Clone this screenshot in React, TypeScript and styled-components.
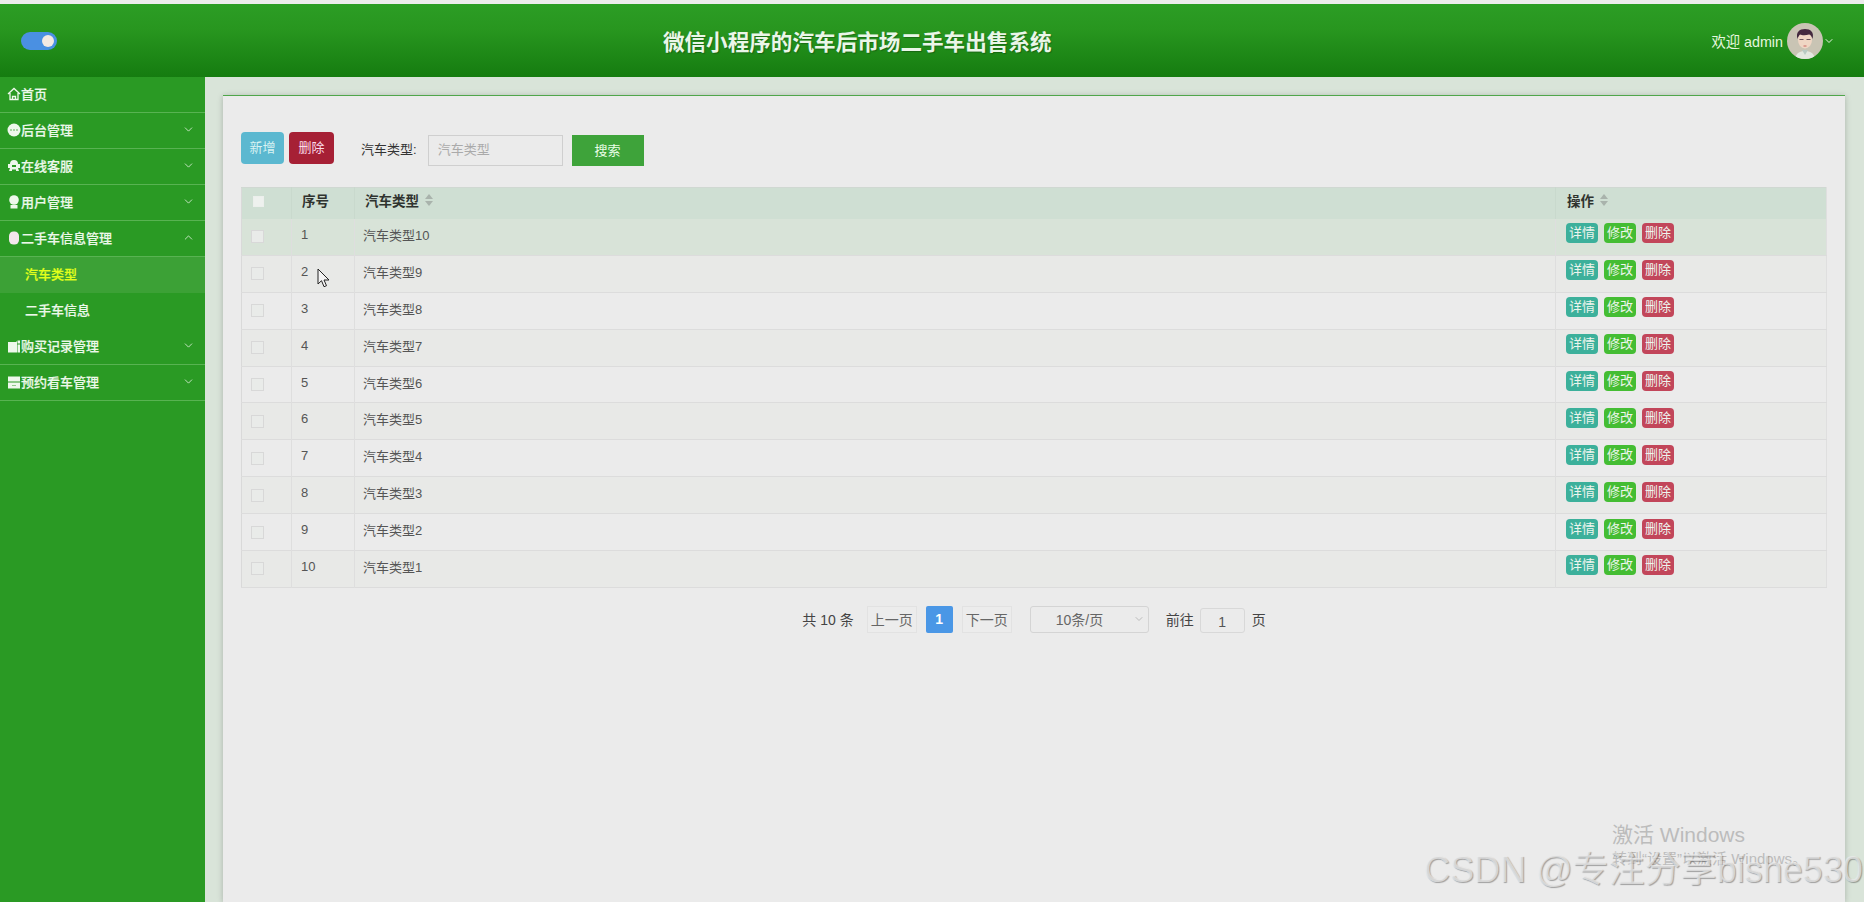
import React from 'react';
import styled, { createGlobalStyle } from 'styled-components';
import { ChevronDown, ChevronUp } from 'lucide-react';

const FONT = '"Liberation Sans", "Noto Sans CJK SC", sans-serif';

const GlobalStyle = createGlobalStyle`
  html, body {
    margin: 0;
    padding: 0;
    height: 100%;
    overflow: hidden;
    background: #ececec;
    font-family: ${FONT};
  }
  * { box-sizing: border-box; }
`;

const Page = styled.div`
  position: relative;
  display: flex;
  flex-direction: column;
  height: 100vh;
  padding-top: 4px;
  overflow: hidden;
`;

const TopBar = styled.header`
  display: flex;
  align-items: center;
  flex: 0 0 73px;
  padding: 0 29px 0 21px;
  background: linear-gradient(180deg, #2c9d25 0%, #28961f 35%, #157c10 100%);
`;

const Toggle = styled.div`
  display: flex;
  align-items: center;
  justify-content: flex-end;
  width: 36px;
  height: 18px;
  padding-right: 3px;
  border-radius: 9px;
  background: #4a90e2;
`;

const Knob = styled.span`
  width: 12px;
  height: 12px;
  border-radius: 50%;
  background: #f4e9e2;
`;

const Title = styled.div`
  flex: 1;
  padding-right: 54px;
  text-align: center;
  color: #eaf6e8;
  font-size: 21.6px;
  font-weight: bold;
  text-shadow: 1px 1px 1px rgba(0, 0, 0, 0.25);
`;

const UserBox = styled.div`
  display: flex;
  align-items: center;
  color: #e6f7df;
  font-size: 14.3px;
`;

const Welcome = styled.span`
  margin-right: 4px;
`;

const Body = styled.div`
  display: flex;
  flex: 1;
  min-height: 0;
  background: #d9e4d9;
`;

const Sidebar = styled.nav`
  flex: 0 0 205px;
  background: #2a9a24;
`;

const MenuItem = styled.div`
  display: flex;
  align-items: center;
  height: 36px;
  padding: 0 10px 2px 7px;
  border-bottom: 1px solid #58b352;
  color: #ecf8ea;
  font-size: 13px;
  font-weight: 500;
  -webkit-text-stroke: 0.2px #ecf8ea;
`;

const MenuLabel = styled.span`
  flex: 1;
`;

const SubItem = styled.div<{ $active?: boolean }>`
  display: flex;
  align-items: center;
  height: 36px;
  padding: 0 0 3px 25px;
  background: ${(props) => (props.$active ? '#3ca136' : 'transparent')};
  color: ${(props) => (props.$active ? '#e2ff1a' : '#ecf8ea')};
  font-size: 13px;
  font-weight: 500;
  -webkit-text-stroke: 0.2px ${(props) => (props.$active ? '#e2ff1a' : '#ecf8ea')};
`;

const Main = styled.main`
  flex: 1;
  min-width: 0;
  padding: 18px 19px 0 18px;
`;

const Card = styled.section`
  height: 100%;
  padding: 36px 18px 0;
  border-top: 1px solid #4fa64a;
  background: #ebebeb;
  box-shadow: 0 1px 6px rgba(0, 0, 0, 0.22);
`;

const Toolbar = styled.div`
  display: flex;
  align-items: flex-start;
  height: 55px;
`;

const ToolButton = styled.button<{ $bg: string; $color: string; $w: number }>`
  width: ${(props) => props.$w}px;
  height: 32px;
  margin-right: 5px;
  padding: 0 0 4px;
  border: 0;
  border-radius: 4px;
  background: ${(props) => props.$bg};
  color: ${(props) => props.$color};
  font-family: ${FONT};
  font-size: 13px;
`;

const SearchLabel = styled.label`
  margin: 3px 11px 0 22px;
  color: #333;
  font-size: 13px;
  line-height: 29px;
`;

const SearchInput = styled.input`
  width: 135px;
  height: 31px;
  margin-top: 3px;
  padding: 0 9px 2px;
  border: 1px solid #cfcfcf;
  background: #ebebeb;
  font-family: ${FONT};
  font-size: 13px;
  outline: none;
  &::placeholder {
    color: #aaa;
  }
`;

const SearchButton = styled.button`
  width: 72px;
  height: 31px;
  margin: 3px 0 0 9px;
  padding: 0 0 2px;
  border: 0;
  background: #3ea33a;
  color: #e9fde6;
  font-family: ${FONT};
  font-size: 13px;
`;

const Table = styled.table`
  width: 1586px;
  table-layout: fixed;
  border-collapse: collapse;
  border-left: 1px solid #d9d9d9;
  border-right: 1px solid #dfdfdf;
  border-top: 1px solid #d0d8d2;
`;

const HeadRow = styled.tr`
  height: 31px;
  background: #cfdfd3;
`;

const HeadCell = styled.th<{ $w?: number }>`
  width: ${(props) => (props.$w ? `${props.$w}px` : 'auto')};
  padding: 0 0 6px 10px;
  border-right: 1px solid #c9d9cd;
  color: #2f332f;
  font-size: 13.5px;
  font-weight: bold;
  text-align: left;
  &:first-child {
    padding-left: 9px;
  }
  &:last-child {
    padding-left: 11px;
    border-right: 0;
  }
`;

const Row = styled.tr`
  height: 36.9px;
  background: #ebebeb;
  border-bottom: 1px solid #dcdcdc;
  &:nth-child(even) {
    background: #e8e9e7;
  }
  &:first-child {
    background: #d8e3d8;
  }
`;

const Cell = styled.td`
  padding: 0 0 5px 8px;
  border-right: 1px solid #dedede;
  color: #555;
  font-size: 13px;
  &:last-child {
    padding: 0 0 7px 9px;
    border-right: 0;
  }
`;

const NumCell = styled(Cell)`
  padding-left: 9px;
`;

const Check = styled.span<{ $head?: boolean }>`
  display: block;
  width: ${(props) => (props.$head ? '11px' : '13px')};
  height: ${(props) => (props.$head ? '11px' : '13px')};
  margin: ${(props) => (props.$head ? '3px 0 0 2px' : '5px 0 0 1px')};
  border: 1px solid ${(props) => (props.$head ? '#ecefec' : '#d8d8d8')};
  background: ${(props) => (props.$head ? '#eef1ee' : '#e9ebe9')};
`;

const HeadInner = styled.span`
  display: inline-flex;
  align-items: center;
  gap: 6px;
`;

const OpWrap = styled.div`
  display: flex;
  gap: 6px;
  margin-left: 1px;
`;

const OpButton = styled.span<{ $bg: string }>`
  height: 20px;
  padding: 0 3px;
  border-radius: 4px;
  background: ${(props) => props.$bg};
  color: #eef5ee;
  font-size: 13px;
  line-height: 19px;
`;

const Pager = styled.div`
  display: flex;
  align-items: center;
  justify-content: center;
  margin-top: 18px;
  color: #444;
  font-size: 14px;
`;

const PageText = styled.span<{ $mr: number }>`
  margin-right: ${(props) => props.$mr}px;
`;

const PageButton = styled.span`
  height: 27px;
  margin-right: 9px;
  padding: 0 3px;
  border: 1px solid #e2e2e2;
  background: #ececec;
  color: #666;
  line-height: 26px;
`;

const PageCurrent = styled.span`
  width: 27px;
  height: 27px;
  margin-right: 9px;
  border-radius: 2px;
  background: #4a97e6;
  color: #fff;
  font-weight: bold;
  line-height: 27px;
  text-align: center;
`;

const PageSelect = styled.div`
  display: flex;
  align-items: center;
  justify-content: space-between;
  width: 119px;
  height: 27px;
  margin: 0 17px 0 9px;
  padding: 0 3px 0 25px;
  border: 1px solid #d4d4d4;
  border-radius: 3px;
  color: #666;
`;

const PageInput = styled.span`
  width: 45px;
  height: 25px;
  margin: 2px 7px 0 0;
  border: 1px solid #d8d8d8;
  border-radius: 3px;
  color: #555;
  line-height: 26px;
  text-align: center;
`;

const Cursor = styled.svg`
  position: absolute;
  left: 317px;
  top: 268px;
`;

const ActivateBox = styled.div`
  position: absolute;
  left: 1612px;
  top: 822px;
  color: #bcbcbc;
`;

const ActivateTitle = styled.div`
  font-size: 21px;
  line-height: 26px;
`;

const ActivateHint = styled.div`
  margin-top: 2px;
  font-size: 15px;
  line-height: 18px;
  white-space: nowrap;
`;

const Watermark = styled.div`
  position: absolute;
  left: 1424px;
  top: 848px;
  color: rgba(238, 238, 238, 0.7);
  font-family: "Liberation Sans", "Noto Sans CJK SC", sans-serif;
  font-size: 36px;
  line-height: 44px;
  white-space: nowrap;
  text-shadow: 1px 1px 1px rgba(0, 0, 0, 0.32);
`;

type IconKind = 'home' | 'dash' | 'service' | 'user' | 'car' | 'order' | 'book';

const NavIcon = ({ kind }: { kind: IconKind }) => (
  <svg width="14" height="14" viewBox="0 0 14 14" fill="#eef8ec">
    {kind === 'home' && (
      <path
        d="M1 7 7 1.5 13 7M3 6v6.5h8V6M5.5 12.5V9.5h3v3"
        fill="none"
        stroke="#eef8ec"
        strokeWidth="1.3"
      />
    )}
    {kind === 'dash' && (
      <>
        <circle cx="7" cy="7" r="6.5" />
        <circle cx="4" cy="7" r="1" fill="#8fc98b" />
        <circle cx="7" cy="7" r="1" fill="#8fc98b" />
        <circle cx="10" cy="7" r="1" fill="#8fc98b" />
      </>
    )}
    {kind === 'service' && (
      <path d="M3 5a4 4 0 0 1 8 0h2v4h-2l1 3H9V10.5H5V12H2l1-3H1V5zM5 6v2h4V6z" fillRule="evenodd" />
    )}
    {kind === 'user' && (
      <>
        <ellipse cx="7" cy="5" rx="4.8" ry="4.8" />
        <path d="M3.5 10h7v3.5h-7z" />
      </>
    )}
    {kind === 'car' && <rect x="2" y="0.5" width="10" height="13" rx="4.5" fill="#f3e6ec" />}
    {kind === 'order' && (
      <>
        <path d="M1 3h8l1-1v11.500H1z" />
        <rect x="10.500" y="1.500" width="2.500" height="3" />
        <rect x="10.500" y="5.500" width="2.500" height="8" />
      </>
    )}
    {kind === 'book' && (
      <>
        <rect x="1" y="1.500" width="12" height="5" />
        <rect x="1" y="7.500" width="12" height="6" />
        <rect x="5" y="10" width="4" height="1" fill="#8fc98b" />
      </>
    )}
  </svg>
);

const SortIcon = () => (
  <svg width="8" height="12" viewBox="0 0 8 12" fill="#a9b3ac">
    <path d="M4 0 8 5H0z" />
    <path d="M0 7h8l-4 5z" />
  </svg>
);

const Avatar = () => (
  <svg width="36" height="36" viewBox="0 0 36 36">
    <defs>
      <clipPath id="avatar-clip">
        <circle cx="18" cy="18" r="18" />
      </clipPath>
    </defs>
    <g clipPath="url(#avatar-clip)">
      <rect width="36" height="36" fill="#c9c4b4" />
      <path d="M8 36c1-6 5-8 10-8s9 2 10 8z" fill="#e4e8e0" />
      <path d="M15 27h6l-3 5z" fill="#b9cbc4" />
      <ellipse cx="18" cy="17" rx="7" ry="8.500" fill="#f0d6c4" />
      <path d="M10.500 16c-2-7 2-10 7.500-10s9.500 3 7.500 10c-1-3-2-4.500-3.500-4.500-3 1-7 1-9 0-1 1-2 2.500-2.500 4.500z" fill="#44293f" />
      <path d="M12.500 16.500h4M19.500 16.500h4" stroke="#5a4650" strokeWidth="0.9" />
      <path d="M16.500 23h3" stroke="#c8655f" strokeWidth="1" />
    </g>
  </svg>
);

const menuTop: { label: string; icon: IconKind; arrow?: boolean }[] = [
  { label: '首页', icon: 'home' },
  { label: '后台管理', icon: 'dash', arrow: true },
  { label: '在线客服', icon: 'service', arrow: true },
  { label: '用户管理', icon: 'user', arrow: true },
];

const menuBottom: { label: string; icon: IconKind }[] = [
  { label: '购买记录管理', icon: 'order' },
  { label: '预约看车管理', icon: 'book' },
];

const rows = [10, 9, 8, 7, 6, 5, 4, 3, 2, 1];

export default function App() {
  return (
    <Page>
      <GlobalStyle />
      <TopBar>
        <Toggle>
          <Knob />
        </Toggle>
        <Title>微信小程序的汽车后市场二手车出售系统</Title>
        <UserBox>
          <Welcome>欢迎 admin</Welcome>
          <Avatar />
          <ChevronDown size={12} />
        </UserBox>
      </TopBar>
      <Body>
        <Sidebar>
          {menuTop.map((item) => (
            <MenuItem key={item.label}>
              <NavIcon kind={item.icon} />
              <MenuLabel>{item.label}</MenuLabel>
              {item.arrow && <ChevronDown size={13} strokeWidth={1.4} />}
            </MenuItem>
          ))}
          <MenuItem>
            <NavIcon kind="car" />
            <MenuLabel>二手车信息管理</MenuLabel>
            <ChevronUp size={13} strokeWidth={1.4} />
          </MenuItem>
          <SubItem $active>汽车类型</SubItem>
          <SubItem>二手车信息</SubItem>
          {menuBottom.map((item) => (
            <MenuItem key={item.label}>
              <NavIcon kind={item.icon} />
              <MenuLabel>{item.label}</MenuLabel>
              <ChevronDown size={13} strokeWidth={1.4} />
            </MenuItem>
          ))}
        </Sidebar>
        <Main>
          <Card>
            <Toolbar>
              <ToolButton $bg="#5bb8d0" $color="#d8f2f2" $w={43}>新增</ToolButton>
              <ToolButton $bg="#a62035" $color="#fbdcea" $w={45}>删除</ToolButton>
              <SearchLabel>汽车类型:</SearchLabel>
              <SearchInput placeholder="汽车类型" />
              <SearchButton>搜索</SearchButton>
            </Toolbar>
            <Table>
              <thead>
                <HeadRow>
                  <HeadCell $w={50}>
                    <Check $head />
                  </HeadCell>
                  <HeadCell $w={63}>序号</HeadCell>
                  <HeadCell>
                    <HeadInner>
                      汽车类型
                      <SortIcon />
                    </HeadInner>
                  </HeadCell>
                  <HeadCell $w={271}>
                    <HeadInner>
                      操作
                      <SortIcon />
                    </HeadInner>
                  </HeadCell>
                </HeadRow>
              </thead>
              <tbody>
                {rows.map((n, i) => (
                  <Row key={n}>
                    <Cell>
                      <Check />
                    </Cell>
                    <NumCell>{i + 1}</NumCell>
                    <Cell>汽车类型{n}</Cell>
                    <Cell>
                      <OpWrap>
                        <OpButton $bg="#3cb09b">详情</OpButton>
                        <OpButton $bg="#44bd33">修改</OpButton>
                        <OpButton $bg="#c2465a">删除</OpButton>
                      </OpWrap>
                    </Cell>
                  </Row>
                ))}
              </tbody>
            </Table>
            <Pager>
              <PageText $mr={13}>共 10 条</PageText>
              <PageButton>上一页</PageButton>
              <PageCurrent>1</PageCurrent>
              <PageButton>下一页</PageButton>
              <PageSelect>
                10条/页
                <ChevronDown size={12} color="#bbb" />
              </PageSelect>
              <PageText $mr={6}>前往</PageText>
              <PageInput>1</PageInput>
              <PageText $mr={0}>页</PageText>
            </Pager>
          </Card>
        </Main>
      </Body>
      <Cursor width="13" height="21" viewBox="0 0 13 21">
        <path d="M1 1v15l3.500-3.300 2.500 6 2.500-1-2.500-5.700H12z" fill="#f4f4f4" stroke="#222" strokeWidth="1" />
      </Cursor>
      <ActivateBox>
        <ActivateTitle>激活 Windows</ActivateTitle>
        <ActivateHint>转到“设置”以激活 Windows。</ActivateHint>
      </ActivateBox>
      <Watermark>CSDN @专注分享bishe530</Watermark>
    </Page>
  );
}
